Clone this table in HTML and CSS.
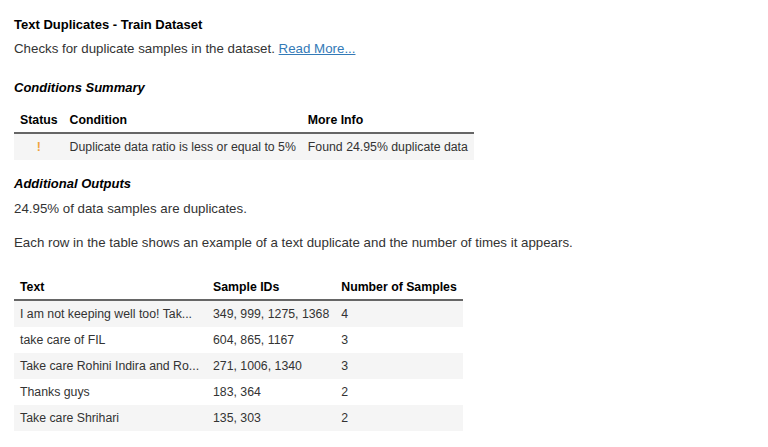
FILE: index.html
```html
<!DOCTYPE html>
<html>
<head>
<meta charset="utf-8">
<link rel="stylesheet" href="styles.css">
</head>
<body>
<div class="output">
  <h4 class="title">Text Duplicates - Train Dataset</h4>
  <p class="desc">Checks for duplicate samples in the dataset. <a href="#" class="link">Read More...</a></p>
  <h5 class="section">Conditions Summary</h5>
  <table class="df cond">
    <thead>
      <tr><th>Status</th><th>Condition</th><th>More Info</th></tr>
    </thead>
    <tbody>
      <tr><td class="warn">!</td><td>Duplicate data ratio is less or equal to 5%</td><td>Found 24.95% duplicate data</td></tr>
    </tbody>
  </table>
  <h5 class="section section-out">Additional Outputs</h5>
  <p class="txt">24.95% of data samples are duplicates.</p>
  <p class="txt txt-2">Each row in the table shows an example of a text duplicate and the number of times it appears.</p>
  <table class="df dups">
    <thead>
      <tr><th class="c-text">Text</th><th>Sample IDs</th><th>Number of Samples</th></tr>
    </thead>
    <tbody>
      <tr><td>I am not keeping well too! Tak...</td><td>349, 999, 1275, 1368</td><td>4</td></tr>
      <tr><td>take care of FIL</td><td>604, 865, 1167</td><td>3</td></tr>
      <tr><td>Take care Rohini Indira and Ro...</td><td>271, 1006, 1340</td><td>3</td></tr>
      <tr><td>Thanks guys</td><td>183, 364</td><td>2</td></tr>
      <tr><td>Take care Shrihari</td><td>135, 303</td><td>2</td></tr>
    </tbody>
  </table>
</div>
</body>
</html>
```
FILE: styles.css
```css
html, body {
  margin: 0;
  padding: 0;
  background: #fff;
}
body {
  font-family: "Liberation Sans", Arial, sans-serif;
  color: #333;
  font-size: 13.3px;
}
.output {
  padding: 17px 14px 0 14px;
}
.title {
  margin: 0;
  font-size: 13px;
  font-weight: bold;
  color: #000;
  line-height: 15px;
}
.desc {
  margin: 9px 0 0 0;
  line-height: 15px;
  font-size: 13.3px;
}
.link {
  color: #337ab7;
  text-decoration: underline;
}
.section {
  margin: 24px 0 0 0;
  font-size: 13px;
  font-weight: bold;
  font-style: italic;
  color: #000;
  line-height: 15px;
}
.section-out {
  margin-top: 16px;
}
.df {
  border-collapse: collapse;
  border-spacing: 0;
  font-size: 12.3px;
  color: #000;
}
.df th {
  font-weight: bold;
  text-align: left;
  padding: 6px 6px 5px 6px;
  line-height: 14px;
  white-space: nowrap;
}
.df td {
  text-align: left;
  padding: 6px 6px;
  line-height: 14px;
  white-space: nowrap;
  color: #333;
}
.df thead {
  border-bottom: 2px solid #666;
}
.df tbody tr:nth-child(odd) {
  background: #f5f5f5;
}
.cond {
  margin-top: 12px;
}
.df td.warn {
  color: #f0a33c;
  text-align: center;
  font-weight: bold;
}
.txt {
  margin: 10px 0 0 0;
  line-height: 15px;
  font-size: 13.3px;
}
.txt-2 {
  margin-top: 19px;
}
.dups {
  margin-top: 24px;
}
.c-text {
  width: 181px;
}
```
